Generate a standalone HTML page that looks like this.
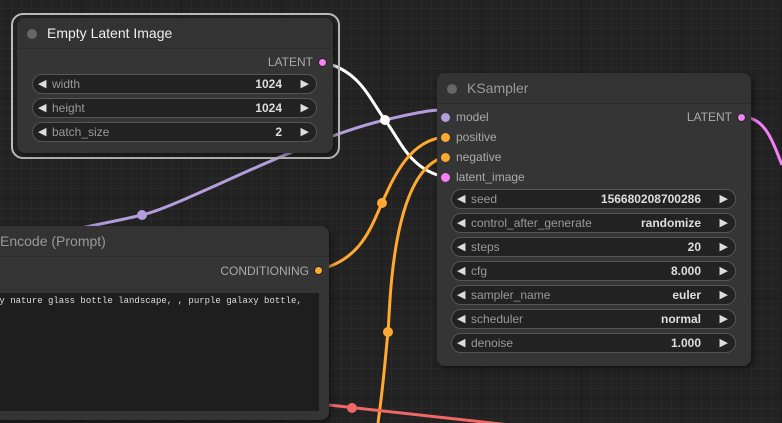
<!DOCTYPE html>
<html><head><style>
*{margin:0;padding:0;box-sizing:border-box}
html{overflow:hidden;width:782px;height:423px}
body{width:782px;height:423px;overflow:hidden;background:#222;position:relative;font-family:"Liberation Sans",sans-serif;
background-image:linear-gradient(#1b1b1b 1px,transparent 1px),linear-gradient(90deg,#1b1b1b 1px,transparent 1px),linear-gradient(#292929 1px,transparent 1px),linear-gradient(90deg,#292929 1px,transparent 1px);
background-size:100px 100px,100px 100px,10px 10px,10px 10px;background-position:0 -2px,-19px 0,0 -2px,-19px 0}
.node{position:absolute;background:#353535;border-radius:8px;box-shadow:2px 2px 6px rgba(0,0,0,.5)}
.title{position:absolute;left:0;right:0;top:0;height:31px;border-bottom:1px solid #2c2c2c;background:#333;border-radius:8px 8px 0 0}
.title .d{position:absolute;left:10px;top:11px;width:10px;height:10px;border-radius:50%;background:#666}
.title span{position:absolute;left:30px;top:7px;font-size:14px;color:#999}
.w{position:absolute;height:20px;border-radius:10px;background:#222;border:1px solid #555;font-size:12px;color:#999}
.w .l{position:absolute;left:5px;top:2px;color:#ddd;font-size:11px}
.w .n{position:absolute;left:19px;top:2px}
.w .v{position:absolute;right:34px;top:2px;color:#ddd;font-weight:bold}
.w .r{position:absolute;right:7px;top:2px;color:#ddd;font-size:11px}
.lab{position:absolute;font-size:12px;color:#aaa}
.dot{position:absolute;width:9px;height:9px;border-radius:50%}
</style></head><body>
<svg width="782" height="423" style="position:absolute;left:0;top:0">
<g fill="none" stroke-width="3">
<path d="M0 250 C60 230,100 225,142 215 S300 140,385 120 S430 117,445 117" stroke="#b39ddb"/>
<path d="M322 62 C360 70,370 100,385 120 S410 170,445 177" stroke="#fff"/>
<path d="M318 270 C360 260,370 230,382 203 S410 140,445 137" stroke="#ffa931"/>
<path d="M378 423 C384 380,386 350,388 332 S390 170,445 157" stroke="#ffa931"/>
<path d="M329 405 L782 455" stroke="#f06767"/>
<path d="M742 117 C765 117,772 140,782 165" stroke="#f57ff5"/>
</g>
<circle cx="142" cy="215" r="5" fill="#b39ddb"/><circle cx="385" cy="120" r="5" fill="#fff"/>
<circle cx="382" cy="203" r="5" fill="#ffa931"/><circle cx="388" cy="332" r="5" fill="#ffa931"/>
<circle cx="352" cy="408" r="5" fill="#f06767"/>
</svg>

<div style="position:absolute;left:11px;top:13px;width:329px;height:146px;border:2px solid #bbb;border-radius:12px"></div>
<div class="node" style="left:17px;top:18px;width:316px;height:135px">
<div class="title"><div class="d"></div><span style="color:#eee">Empty Latent Image</span></div>
<div class="lab" style="right:20px;top:37px">LATENT</div><div class="dot" style="left:301px;top:40px;background:#f57ff5;border:1px solid #222"></div>
<div class="w" style="left:15px;top:56px;width:285px"><span class="l">◀</span><span class="n">width</span><span class="v">1024</span><span class="r">▶</span></div>
<div class="w" style="left:15px;top:80px;width:285px"><span class="l">◀</span><span class="n">height</span><span class="v">1024</span><span class="r">▶</span></div>
<div class="w" style="left:15px;top:104px;width:285px"><span class="l">◀</span><span class="n">batch_size</span><span class="v">2</span><span class="r">▶</span></div>
</div>

<div class="node" style="left:437px;top:73px;width:314px;height:293px">
<div class="title"><div class="d"></div><span>KSampler</span></div>
<div class="dot" style="left:4px;top:40px;background:#b39ddb"></div><div class="lab" style="left:19px;top:37px">model</div>
<div class="dot" style="left:4px;top:60px;background:#ffa931"></div><div class="lab" style="left:19px;top:57px">positive</div>
<div class="dot" style="left:4px;top:80px;background:#ffa931"></div><div class="lab" style="left:19px;top:77px">negative</div>
<div class="dot" style="left:4px;top:100px;background:#f57ff5"></div><div class="lab" style="left:19px;top:97px">latent_image</div>
<div class="lab" style="right:19px;top:37px">LATENT</div><div class="dot" style="left:300px;top:40px;background:#f57ff5;border:1px solid #222"></div>
<div class="w" style="left:14px;top:116px;width:285px"><span class="l">◀</span><span class="n">seed</span><span class="v">156680208700286</span><span class="r">▶</span></div>
<div class="w" style="left:14px;top:140px;width:285px"><span class="l">◀</span><span class="n">control_after_generate</span><span class="v">randomize</span><span class="r">▶</span></div>
<div class="w" style="left:14px;top:164px;width:285px"><span class="l">◀</span><span class="n">steps</span><span class="v">20</span><span class="r">▶</span></div>
<div class="w" style="left:14px;top:188px;width:285px"><span class="l">◀</span><span class="n">cfg</span><span class="v">8.000</span><span class="r">▶</span></div>
<div class="w" style="left:14px;top:212px;width:285px"><span class="l">◀</span><span class="n">sampler_name</span><span class="v">euler</span><span class="r">▶</span></div>
<div class="w" style="left:14px;top:236px;width:285px"><span class="l">◀</span><span class="n">scheduler</span><span class="v">normal</span><span class="r">▶</span></div>
<div class="w" style="left:14px;top:260px;width:285px"><span class="l">◀</span><span class="n">denoise</span><span class="v">1.000</span><span class="r">▶</span></div>
</div>

<div class="node" style="left:-20px;top:226px;width:349px;height:194px">
<div class="title"><span style="left:20px">Encode (Prompt)</span></div>
<div class="lab" style="right:20px;top:38px">CONDITIONING</div><div class="dot" style="left:334px;top:40px;background:#ffa931;border:1px solid #222"></div>
<div style="position:absolute;left:0;top:67px;width:339px;height:118px;background:#1e1e1e"></div>
<div style="position:absolute;left:14px;top:70px;font-family:'Liberation Mono',monospace;font-size:9px;color:#ddd;white-space:pre">ly nature glass bottle landscape, , purple galaxy bottle,</div>
</div>
</body></html>
